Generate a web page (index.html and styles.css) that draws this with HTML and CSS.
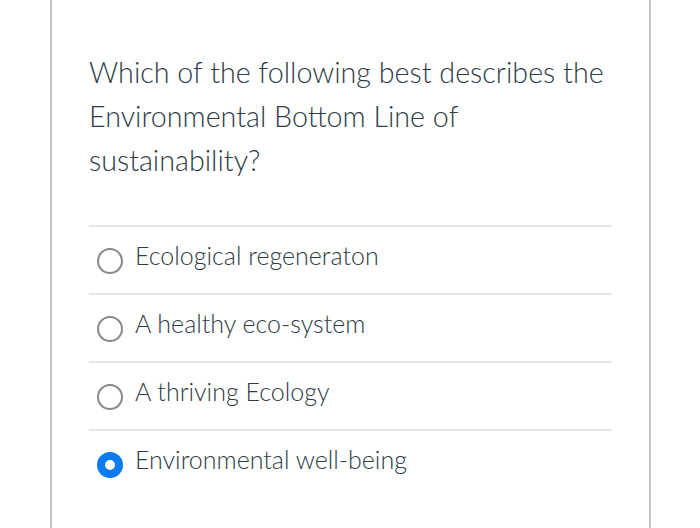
FILE: index.html
```html
<!DOCTYPE html>
<html lang="en">
<head>
<meta charset="utf-8">
<title>Quiz question</title>
<link rel="stylesheet" href="styles.css">
</head>
<body>
<div class="card">
  <div class="question">Which of the following best describes the Environmental Bottom Line of sustainability?</div>
  <div class="answers">
    <label class="answer"><span class="radio"></span><span class="label">Ecological regeneraton</span></label>
    <label class="answer"><span class="radio"></span><span class="label">A healthy eco-system</span></label>
    <label class="answer"><span class="radio"></span><span class="label">A thriving Ecology</span></label>
    <label class="answer"><span class="radio checked"></span><span class="label">Environmental well-being</span></label>
  </div>
</div>
</body>
</html>
```
FILE: styles.css
```css
html, body {
  margin: 0;
  padding: 0;
  background: #ffffff;
  height: 100%;
}
body {
  font-family: Lato, "Liberation Sans", sans-serif;
  color: #2d3b45;
}
.card {
  box-sizing: border-box;
  width: 601px;
  margin-left: 50px;
  min-height: 528px;
  border-left: 2px solid #c4c7ca;
  border-right: 2px solid #c4c7ca;
  padding: 50px 37px 0 37px;
}
.question {
  font-size: 28.7px;
  font-weight: 300;
  line-height: 44px;
  color: #2d3b45;
}
.answers {
  margin-top: 43px;
}
.answer {
  display: flex;
  align-items: flex-start;
  height: 66px;
  border-top: 2px solid #e4e6e8;
  gap: 12px;
  padding-left: 8px;
}
.radio {
  box-sizing: border-box;
  width: 26px;
  height: 26px;
  margin-top: 21px;
  border-radius: 50%;
  border: 2px solid #878a8c;
  flex: none;
}
.radio.checked {
  border: 8px solid #0d7bef;
  background: #ffffff;
}
.label {
  margin-top: 13px;
  font-size: 25px;
  line-height: 30px;
  font-weight: 300;
  color: #2d3b45;
}
```
